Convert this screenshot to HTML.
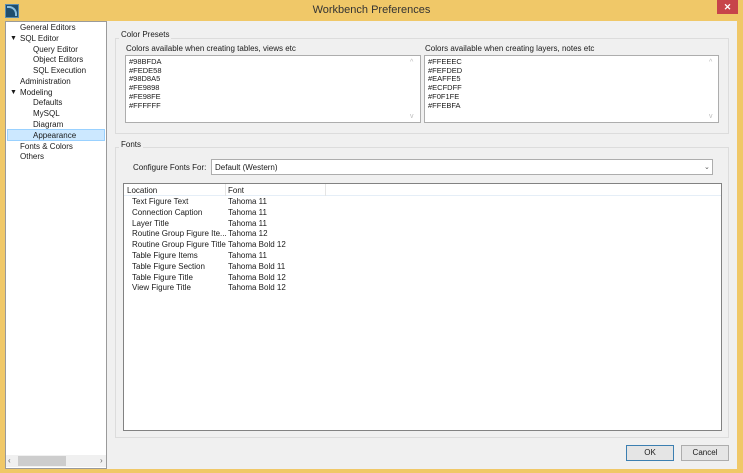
<!DOCTYPE html>
<html><head><meta charset="utf-8"><style>
*{margin:0;padding:0;box-sizing:border-box}
body{width:743px;height:473px;background:#f0c868;font-family:"Liberation Sans",sans-serif;font-size:8px;color:#1a1a1a;position:relative;overflow:hidden}
.a{position:absolute}
.t{position:absolute;white-space:nowrap;line-height:11px}
</style></head><body>
<div class="a" style="left:5px;top:4px;width:14px;height:14px;background:#1f4e6e;border:1px solid #5a8db0"></div>
<div class="a" style="left:7px;top:6px;width:10px;height:10px;border-top:2px solid #8cc0e0;border-right:2px solid #8cc0e0;border-radius:0 8px 0 0"></div>
<div class="t" style="left:0;width:743px;top:5px;text-align:center;font-size:11px;color:#333">Workbench Preferences</div>
<div class="a" style="left:717px;top:0;width:21px;height:14px;background:#c7444a;color:#fff;font-size:9px;text-align:center;line-height:14px;font-weight:bold">✕</div>
<div class="a" style="left:5px;top:21px;width:732px;height:448px;background:#f0f0f0"></div>
<!-- sidebar -->
<div class="a" style="left:5px;top:21px;width:102px;height:448px;background:#fff;border:1px solid #9a9a9a"></div>
<div class="a" style="left:7px;top:129px;width:98px;height:12px;background:#cce8ff;border:1px solid #99d1ff"></div>
<div class="t" style="left:20px;top:22px">General Editors</div>
<div class="t" style="left:10px;top:33px;font-size:7px">▼</div><div class="t" style="left:20px;top:33px">SQL Editor</div>
<div class="t" style="left:33px;top:44px">Query Editor</div>
<div class="t" style="left:33px;top:54px">Object Editors</div>
<div class="t" style="left:33px;top:65px">SQL Execution</div>
<div class="t" style="left:20px;top:76px">Administration</div>
<div class="t" style="left:10px;top:87px;font-size:7px">▼</div><div class="t" style="left:20px;top:87px">Modeling</div>
<div class="t" style="left:33px;top:97px">Defaults</div>
<div class="t" style="left:33px;top:108px">MySQL</div>
<div class="t" style="left:33px;top:119px">Diagram</div>
<div class="t" style="left:33px;top:130px">Appearance</div>
<div class="t" style="left:20px;top:141px">Fonts &amp; Colors</div>
<div class="t" style="left:20px;top:151px">Others</div>
<div class="a" style="left:6px;top:455px;width:100px;height:12px;background:#f0f0f0"></div>
<div class="a" style="left:18px;top:456px;width:48px;height:10px;background:#cdcdcd"></div>
<div class="t" style="left:8px;top:455px;color:#666">‹</div><div class="t" style="left:100px;top:455px;color:#666">›</div>
<!-- color presets -->
<div class="a" style="left:115px;top:38px;width:614px;height:96px;border:1px solid #dcdcdc"></div>
<div class="t" style="left:119px;top:29px;background:#f0f0f0;padding:0 2px">Color Presets</div>
<div class="t" style="left:126px;top:43px">Colors available when creating tables, views etc</div>
<div class="a" style="left:125px;top:55px;width:296px;height:68px;background:#fff;border:1px solid #adadad"></div>
<div class="t" style="left:129px;top:58px;line-height:8.7px;font-size:7.5px">#98BFDA<br>#FEDE58<br>#98D8A5<br>#FE9898<br>#FE98FE<br>#FFFFFF</div>
<div class="t" style="left:410px;top:57px;color:#bbb;font-size:7px">^</div><div class="t" style="left:410px;top:111px;color:#bbb;font-size:7px">v</div>
<div class="t" style="left:425px;top:43px">Colors available when creating layers, notes etc</div>
<div class="a" style="left:424px;top:55px;width:295px;height:68px;background:#fff;border:1px solid #adadad"></div>
<div class="t" style="left:428px;top:58px;line-height:8.7px;font-size:7.5px">#FFEEEC<br>#FEFDED<br>#EAFFE5<br>#ECFDFF<br>#F0F1FE<br>#FFEBFA</div>
<div class="t" style="left:709px;top:57px;color:#bbb;font-size:7px">^</div><div class="t" style="left:709px;top:111px;color:#bbb;font-size:7px">v</div>
<!-- fonts -->
<div class="a" style="left:115px;top:147px;width:614px;height:291px;border:1px solid #dcdcdc"></div>
<div class="t" style="left:119px;top:139px;background:#f0f0f0;padding:0 2px">Fonts</div>
<div class="t" style="left:133px;top:162px">Configure Fonts For:</div>
<div class="a" style="left:211px;top:159px;width:502px;height:16px;background:#fff;border:1px solid #adadad"></div>
<div class="t" style="left:215px;top:162px">Default (Western)</div>
<div class="t" style="left:704px;top:162px;color:#555;font-size:7px">⌄</div>
<div class="a" style="left:123px;top:183px;width:599px;height:248px;background:#fff;border:1px solid #828282"></div>
<div class="a" style="left:124px;top:184px;width:597px;height:12px;border-bottom:1px solid #e5eef7"></div>
<div class="a" style="left:225px;top:184px;width:1px;height:12px;background:#e5e5e5"></div>
<div class="a" style="left:325px;top:184px;width:1px;height:12px;background:#e5e5e5"></div>
<div class="t" style="left:127px;top:185px">Location</div>
<div class="t" style="left:228px;top:185px">Font</div>
<div class="t" style="left:132px;top:197px;line-height:10.8px">Text Figure Text<br>Connection Caption<br>Layer Title<br>Routine Group Figure Ite...<br>Routine Group Figure Title<br>Table Figure Items<br>Table Figure Section<br>Table Figure Title<br>View Figure Title</div>
<div class="t" style="left:228px;top:197px;line-height:10.8px">Tahoma 11<br>Tahoma 11<br>Tahoma 11<br>Tahoma 12<br>Tahoma Bold 12<br>Tahoma 11<br>Tahoma Bold 11<br>Tahoma Bold 12<br>Tahoma Bold 12</div>
<!-- buttons -->
<div class="a" style="left:626px;top:445px;width:48px;height:16px;background:#e5e5e5;border:1px solid #3c7fb1;text-align:center;line-height:14px">OK</div>
<div class="a" style="left:681px;top:445px;width:48px;height:16px;background:#e5e5e5;border:1px solid #adadad;text-align:center;line-height:14px">Cancel</div>
</body></html>
